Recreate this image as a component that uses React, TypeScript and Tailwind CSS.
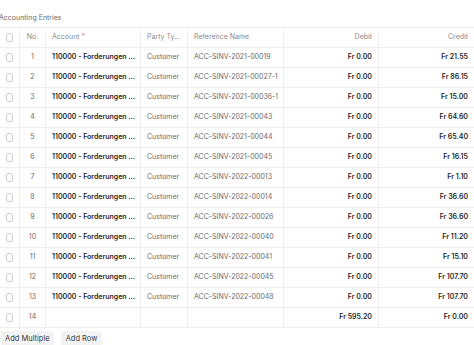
const rows = [
  ['1', 'ACC-SINV-2021-00019', 'Fr 21.55'],
  ['2', 'ACC-SINV-2021-00027-1', 'Fr 86.15'],
  ['3', 'ACC-SINV-2021-00036-1', 'Fr 15.00'],
  ['4', 'ACC-SINV-2021-00043', 'Fr 64.60'],
  ['5', 'ACC-SINV-2021-00044', 'Fr 65.40'],
  ['6', 'ACC-SINV-2021-00045', 'Fr 16.15'],
  ['7', 'ACC-SINV-2022-00013', 'Fr 1.10'],
  ['8', 'ACC-SINV-2022-00014', 'Fr 36.60'],
  ['9', 'ACC-SINV-2022-00026', 'Fr 36.60'],
  ['10', 'ACC-SINV-2022-00040', 'Fr 11.20'],
  ['11', 'ACC-SINV-2022-00041', 'Fr 15.10'],
  ['12', 'ACC-SINV-2022-00045', 'Fr 107.70'],
  ['13', 'ACC-SINV-2022-00048', 'Fr 107.70'],
]

const cols = 'grid grid-cols-[20px_26px_95px_47px_96px_95px_95px]'
const cell = 'flex h-[19px] items-center border-r border-[#efefef] px-[6px] whitespace-nowrap overflow-hidden'

function Check() {
  return <span className="block h-[9px] w-[9px] rounded-[2px] border border-[#cfcfcf] bg-white" />
}

export default function App() {
  return (
    <div
      className="h-[345px] w-[474px] overflow-hidden bg-white text-[7px] text-[#383838]"
      style={{ fontFamily: 'Inter, "Noto Sans", sans-serif' }}
    >
      <p className="ml-[-1px] pt-[13px] text-[#6b6b6b]">Accounting Entries</p>

      <div className="mt-[3px] w-[474px] border-t border-[#efefef]">
        <div className={`${cols} border-b border-[#efefef] text-[#8a8a8a]`}>
          <div className={`${cell} justify-center px-0`}>
            <Check />
          </div>
          <div className={`${cell} justify-center`}>No.</div>
          <div className={cell}>
            Account <span className="ml-[2px] text-[#e38b8b]">*</span>
          </div>
          <div className={cell}>Party Ty...</div>
          <div className={cell}>Reference Name</div>
          <div className={`${cell} justify-end`}>Debit</div>
          <div className={`${cell} justify-end border-r-0`}>Credit</div>
        </div>

        {rows.map(([no, ref, credit]) => (
          <div key={no} className={`${cols} border-b border-[#efefef]`}>
            <div className={`${cell} justify-center px-0`}>
              <Check />
            </div>
            <div className={`${cell} justify-center text-[#6b6b6b]`}>{no}</div>
            <div className={`${cell} font-semibold text-[#1f1f1f]`}>110000 - Forderungen ...</div>
            <div className={`${cell} text-[#6b6b6b]`}>Customer</div>
            <div className={`${cell} text-[#6b6b6b]`}>{ref}</div>
            <div className={`${cell} justify-end font-semibold text-[#1f1f1f]`}>Fr 0.00</div>
            <div className={`${cell} justify-end border-r-0 font-semibold text-[#1f1f1f]`}>{credit}</div>
          </div>
        ))}

        <div className={`${cols} border-b border-[#efefef]`}>
          <div className={`${cell} justify-center px-0`}>
            <Check />
          </div>
          <div className={`${cell} justify-center text-[#6b6b6b]`}>14</div>
          <div className={cell} />
          <div className={cell} />
          <div className={cell} />
          <div className={`${cell} justify-end font-semibold text-[#1f1f1f]`}>Fr 595.20</div>
          <div className={`${cell} justify-end border-r-0 font-semibold text-[#1f1f1f]`}>Fr 0.00</div>
        </div>
      </div>

      <div className="mt-[3px] flex gap-[7px] pl-[1px]">
        <button className="rounded-[3px] bg-[#f3f3f3] px-[4px] py-[3px] text-[7.5px] leading-[9px] text-[#383838]">
          Add Multiple
        </button>
        <button className="rounded-[3px] bg-[#f3f3f3] px-[5px] py-[3px] text-[7.5px] leading-[9px] text-[#383838]">
          Add Row
        </button>
      </div>
    </div>
  )
}
